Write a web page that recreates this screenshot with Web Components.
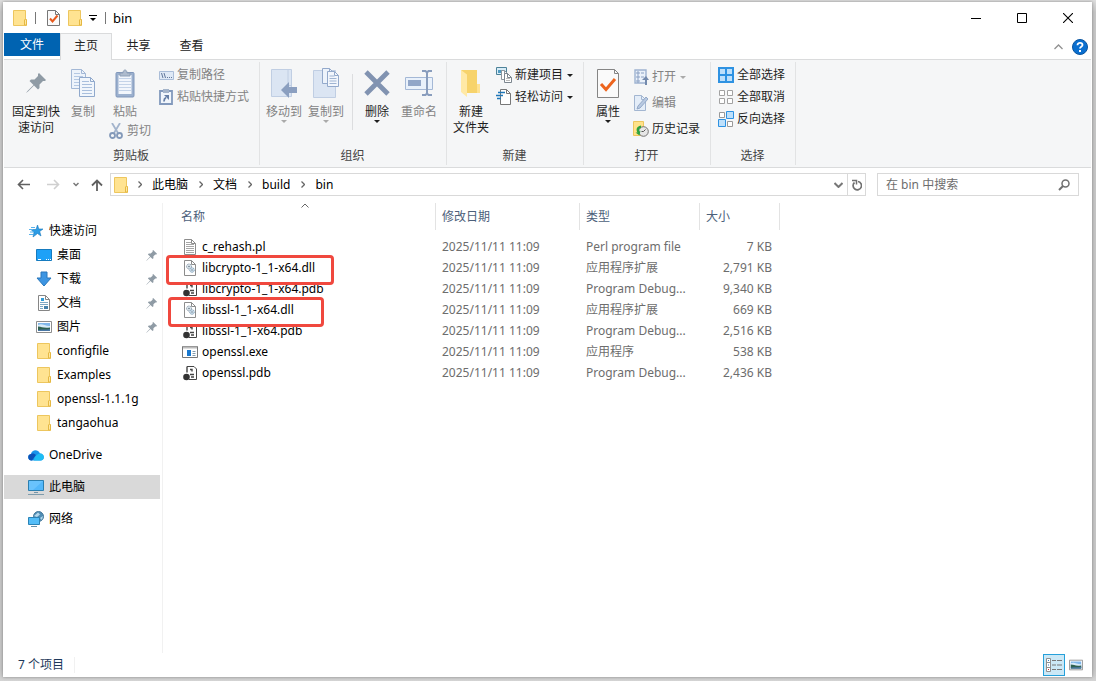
<!DOCTYPE html>
<html lang="zh-CN">
<head>
<meta charset="utf-8">
<meta name="viewport" content="width=device-width, initial-scale=1">
<title>bin</title>
<style>
  html, body {
    margin: 0;
    height: 100%;
  }

  body {
    --line: #dadbdc;
    --ribbon: #f5f6f7;
    --accent: #0063b1;
    --muted: #6d6d6d;
    --heading: #4c607a;
    box-sizing: border-box;
    display: flex;
    padding: 2px 4px 4px 3px;
    background: linear-gradient(#dedede, #c6c6c6 12px, #c6c6c6 calc(100% - 12px), #d4d4d4);
    color: #000;
    font: 12px/16px "Noto Sans", "Noto Sans CJK SC", sans-serif;
  }
</style>
</head>
<body>

<explorer-window>
  <title-bar slot="title">bin</title-bar>
  <ribbon-tabs slot="tabs"></ribbon-tabs>

  <ribbon-bar slot="ribbon">
    <ribbon-group label="剪贴板">
      <ribbon-button large wide icon="pin">固定到快<br>速访问</ribbon-button>
      <ribbon-button large narrow disabled icon="copy">复制</ribbon-button>
      <ribbon-stack>
        <ribbon-button large disabled icon="paste">粘贴</ribbon-button>
        <ribbon-button indent disabled icon="cut">剪切</ribbon-button>
      </ribbon-stack>
      <ribbon-stack small apart>
        <ribbon-button disabled icon="copy-path">复制路径</ribbon-button>
        <ribbon-button disabled icon="paste-link">粘贴快捷方式</ribbon-button>
      </ribbon-stack>
    </ribbon-group>

    <ribbon-group label="组织">
      <ribbon-button large disabled menu icon="move-to">移动到</ribbon-button>
      <ribbon-button large disabled menu icon="copy-to">复制到</ribbon-button>
      <ribbon-divider></ribbon-divider>
      <ribbon-button large menu icon="delete">删除</ribbon-button>
      <ribbon-button large disabled icon="rename">重命名</ribbon-button>
    </ribbon-group>

    <ribbon-group label="新建">
      <ribbon-button large icon="new-folder">新建<br>文件夹</ribbon-button>
      <ribbon-stack small>
        <ribbon-button menu icon="new-item">新建项目</ribbon-button>
        <ribbon-button menu icon="easy-access">轻松访问</ribbon-button>
      </ribbon-stack>
    </ribbon-group>

    <ribbon-group label="打开">
      <ribbon-button large menu icon="properties">属性</ribbon-button>
      <ribbon-stack small loose>
        <ribbon-button disabled menu icon="open">打开</ribbon-button>
        <ribbon-button disabled icon="edit">编辑</ribbon-button>
        <ribbon-button icon="history">历史记录</ribbon-button>
      </ribbon-stack>
    </ribbon-group>

    <ribbon-group label="选择">
      <ribbon-stack small>
        <ribbon-button icon="select-all">全部选择</ribbon-button>
        <ribbon-button icon="select-none">全部取消</ribbon-button>
        <ribbon-button icon="select-invert">反向选择</ribbon-button>
      </ribbon-stack>
    </ribbon-group>
  </ribbon-bar>

  <address-bar slot="address" path="此电脑/文档/build/bin"></address-bar>

  <nav-pane slot="nav">
    <nav-group>
      <nav-item icon="star">快速访问</nav-item>
      <nav-item child pinned icon="desktop">桌面</nav-item>
      <nav-item child pinned icon="download">下载</nav-item>
      <nav-item child pinned icon="document">文档</nav-item>
      <nav-item child pinned icon="picture">图片</nav-item>
      <nav-item child icon="folder">configfile</nav-item>
      <nav-item child icon="folder">Examples</nav-item>
      <nav-item child icon="folder">openssl-1.1.1g</nav-item>
      <nav-item child icon="folder">tangaohua</nav-item>
    </nav-group>
    <nav-group><nav-item icon="cloud">OneDrive</nav-item></nav-group>
    <nav-group><nav-item selected icon="computer">此电脑</nav-item></nav-group>
    <nav-group><nav-item icon="network">网络</nav-item></nav-group>
  </nav-pane>

  <file-list></file-list>
  <status-bar slot="status">7 个项目</status-bar>
</explorer-window>

<script>
const sheet = (x, y, w, h, stroke, fill) =>
  `<path d="M${x} ${y}h${w - 4}l4 4v${h - 4}h-${w}z" fill="${fill}" stroke="${stroke}"/>
   <path d="M${x + w - 4} ${y}v4h4" fill="none" stroke="${stroke}"/>`;

const pinPath = `<path fill="#8f9ba5" d="M13 0l7 7-1 1h-2l-3.500 3.500v3.500l-1.500 1.500-4-4L2 18.500 0 20l1.500-2 6-6-4-4L5 6.500h3.500L12 3V1z"/>`;

const pdb = `<path d="M5 1.500h7l2.500 2.500v10.500H7" fill="#fff" stroke="#444"/><path d="M5 1.500v6M8 4.500h2v2M8 9.500h4M9 12h3" stroke="#444" fill="none" stroke-width="1.400"/><circle cx="4.500" cy="12" r="3.300" fill="#333"/>`;

const dll = `${sheet(2.5, 0.5, 11, 15, "#8c8c8c", "#fff")}<circle cx="7" cy="6.500" r="2.500" fill="#dbe5ec" stroke="#8596a5" stroke-dasharray="1.200 .6"/><circle cx="7" cy="6.500" r=".8" fill="#687987"/><circle cx="10" cy="10" r="2.300" fill="#cfe0ec" stroke="#7c9bb4" stroke-dasharray="1.200 .6"/><circle cx="10" cy="10" r=".7" fill="#687987"/>`;

const picture = `<path d="M.5 2.500h15v11H.5z" fill="#fff" stroke="#8d8d8d"/><path d="M2 4h12v8H2z" fill="#80b7eb"/><path d="M2 6c4-2 6 1 12 1v3H2z" fill="#d8ebf8"/><path d="M2 7.500c4 0 5 2 12 1V12H2z" fill="#2f6150"/><path d="M2 11c5-1 8 0 12-1v2H2z" fill="#4a77a5"/>`;

// [width, height, markup, viewBox when it differs from the size]
const icons = {
  pin: [20, 20, pinPath],
  "pin-small": [11, 11, pinPath, "0 0 20 20"],
  folder: [14, 16, `<path d="M.5.5h12v9h1v6H.5z" fill="#ffe391" stroke="#edc65e"/><path d="M11.500 15v-5l1-1 1 1v5z" fill="#ffe8a1" stroke="#e5b843"/>`],
  check: [13, 16, `${sheet(0.5, 0.5, 12, 15, "#777", "#fafafa")}<path d="M3 8.500l2.500 3 5-6" fill="none" stroke="#e8591c" stroke-width="2"/>`],
  "qat-menu": [8, 6, `<path d="M0 .5h8" stroke="#000"/><path d="M1 3h6L4 6z"/>`],
  minimize: [10, 10, `<path d="M0 5.500h10" stroke="#000"/>`],
  maximize: [10, 10, `<path d="M.5.500h9v9h-9z" fill="none" stroke="#000"/>`],
  close: [10, 10, `<path d="M0 0l10 10M10 0L0 10" stroke="#000" stroke-width="1.100"/>`],
  collapse: [9, 6, `<path d="M.5 5l4-4 4 4" fill="none" stroke="#919191" stroke-width="1.300"/>`],
  help: [16, 16, `<circle cx="8" cy="8" r="7.500" fill="#0a6fd0" stroke="#0a549e"/><path d="M5.500 6.200C5.500 3 10.500 3.200 10.500 6c0 1.800-2.500 1.800-2.500 3.500" fill="none" stroke="#fff" stroke-width="1.800"/><path d="M7 11h2v2H7z" fill="#fff"/>`],
  caret: [6, 3, `<path d="M0 0h6L3 3z" fill="currentColor"/>`],

  copy: [24, 28, `${sheet(0.5, 0.5, 14, 19, "#a3b8d6", "#edf3fb")}<path d="M3 4.500h6M3 7.500h9M3 10.500h9M3 13.500h9M3 16.500h9" stroke="#b4c8e3"/>${sheet(8.5, 8.5, 15, 19, "#90a9cc", "#f1f6fc")}<path d="M11 12.500h7M11 15.500h10M11 18.500h10M11 21.500h10M11 24.500h10" stroke="#a9bfdd"/>`],
  paste: [20, 29, `<path d="M1 4.500q0-1 1-1h16q1 0 1 1v22q0 1.500-1 1.500H2q-1 0-1-1.500z" fill="#9bb0ce" stroke="#8097bb"/><path d="M3.500 6h13v19h-13z" fill="#f2f6fc"/><path d="M4 9.500h12M4 12.500h12M4 15.500h12M4 18.500h12M4 21.500h12" stroke="#c4d3e8"/><path d="M5 7V4h3c0-4 4-4 4 0h3v3z" fill="#aebbcd" stroke="#8fa0b7"/>`],
  cut: [14, 16, `<path d="M3 0l6 10M11 0L5 10" stroke="#a3b4cc" stroke-width="1.800"/><circle cx="3.500" cy="12.500" r="2.500" fill="none" stroke="#8399b9" stroke-width="1.800"/><circle cx="10.500" cy="12.500" r="2.500" fill="none" stroke="#8399b9" stroke-width="1.800"/>`],
  "copy-path": [15, 9, `<path d="M.5.500h14v8H.500z" fill="#dfe9f6" stroke="#aabdd8"/><path d="M2.500 2l1.500 5M5 2l1.500 5M8 6.500h1M10 6.500h1M12 6.500h1" stroke="#61779b"/>`],
  "paste-link": [14, 16, `<path d="M1 2h12v13H1z" fill="#f1f6fc" stroke="#8299bc" stroke-width="1.800"/><path d="M4 0h6v4H4z" fill="#a4b4ca"/><path d="M5 12.500c0-2 0-3 2-4" fill="none" stroke="#667fa6" stroke-width="1.800"/><path d="M5 6h5v5z" fill="#667fa6"/>`],
  "move-to": [26, 29, `<path d="M.5.500h20v27H.500z" fill="#dbe5f3" stroke="#c0cee3"/><path d="M17 .5v16h3" fill="none" stroke="#c0cee3"/><path d="M10 21l8-8v5h8v6h-8v5z" fill="#8b9fc0"/>`],
  "copy-to": [26, 31, `<path d="M.5 2.500h22v27H.500z" fill="#dbe5f3" stroke="#c0cee3"/>${sheet(9.5, 0.5, 11, 15, "#93a9cb", "#edf3fb")}${sheet(14.5, 3.5, 11, 15, "#93a9cb", "#f2f6fc")}<path d="M16.500 8h5M16.500 10.500h7M16.500 13h7M16.500 15.500h7" stroke="#9fb4d2"/>`],
  delete: [26, 26, `<path d="M2 2l22 22M24 2L2 24" stroke="#8193b1" stroke-width="4.800"/>`],
  rename: [28, 26, `<path d="M.5 7.500h27v12H.500z" fill="#e9f1fb" stroke="#a4b8d6"/><path d="M3 10h13v6H3z" fill="#91a6c8"/><path d="M17 1h3.500l1.500 1.500L23.500 1H27M22 2v22M17 25h3.500l1.500-1.500 1.500 1.500H27" fill="none" stroke="#899dbd" stroke-width="2"/>`],
  "new-folder": [20, 28, `<path d="M0 1h16v14h3v9H6z" fill="#f7d36b"/><path d="M0 1l6 4.500V28l-6-5z" fill="#ffe9a6"/><path d="M16 15h3v9h-3z" fill="#ffe293"/>`],
  "new-item": [16, 16, `<path d="M.5.500h10v7H.500z" fill="#d8ecf7" stroke="#4d8299"/><path d="M2 3h5v3H2z" fill="#4e9ac1"/>${sheet(5.5, 3.5, 7, 9, "#8d969e", "#fff")}${sheet(8.5, 6.5, 7, 9, "#7c868f", "#fff")}<path d="M10 11.500h4M10 13.500h4" stroke="#bbb"/>`],
  "easy-access": [16, 16, `${sheet(4.5, 0.5, 10, 15, "#777", "#fff")}<path d="M2 3.500h7M0 6.500h7M1 9.500h4" stroke="#1f77b9" stroke-width="1.500"/>`],
  properties: [22, 29, `${sheet(0.5, 0.5, 21, 28, "#858585", "#fafafa")}<path d="M4 15l5 5.500L18 10" fill="none" stroke="#ed641d" stroke-width="3"/>`],
  open: [15, 16, `<path d="M1 1h11v13H1z" fill="#eaf1fa" stroke="#9eb3d1" stroke-width="1.400"/><path d="M3 3h2v2H3zM3 7h2v2H3zM3 11h2v2H3zM7 4h3M7 8h3" stroke="#8aa0c3" fill="none"/><path d="M11 16v-5H8l4-4 3 4h-2v5z" fill="#738aad"/>`],
  edit: [14, 16, `${sheet(0.5, 0.5, 11, 15, "#a3b6d1", "#e4edf8")}<path d="M3 14l1-3 8-9 2 2-8 9z" fill="#b8c9e1" stroke="#94a9c8"/>`],
  history: [16, 16, `<path d="M.5.500h10v14H.500z" fill="#ffe28a" stroke="#edc65e"/><circle cx="10.500" cy="10.500" r="4.800" fill="#e7e7e7" stroke="#737373"/><path d="M12.500 8.500l-2 2h-2" stroke="#555" fill="none"/><path d="M8 4.500C3 5.500 3 9 4.500 11.500H2.500l4 3 1-5-1 1C5.500 9 6 7 8 7z" fill="#2ba23e"/>`],
  "select-all": [16, 16, `<path d="M1 1h14v14H1zM8 1v14M1 8h14" fill="#bee0fb" stroke="#2e92e2" stroke-width="2"/>`],
  "select-none": [14, 14, `<path d="M.5.500h5v5h-5zM8.500.500h5v5h-5zM.5 8.500h5v5h-5zM8.500 8.500h5v5h-5z" fill="#fff" stroke="#a2a2a2"/>`],
  "select-invert": [16, 16, `<path d="M1.500 1.500h5v5h-5zM9.500 10.500h5v5h-5z" fill="#fff" stroke="#999"/><path d="M8.500.500h7v7h-7zM.5 8.500h7v7h-7z" fill="#bee0fb" stroke="#2e92e2"/>`],

  back: [13, 11, `<path d="M13 5.500H1.500M6 1L1.500 5.500 6 10" fill="none" stroke="#606060" stroke-width="1.600"/>`],
  forward: [13, 11, `<path d="M0 5.500h11.500M7 1l4.500 4.500L7 10" fill="none" stroke="#cfcfcf" stroke-width="1.600"/>`],
  up: [12, 12, `<path d="M6 12V1.500M1 6.500l5-5 5 5" fill="none" stroke="#606060" stroke-width="1.800"/>`],
  "chevron-down": [6, 5, `<path d="M.5 1L3 3.500 5.500 1" fill="none" stroke="#777" stroke-width="1.500"/>`],
  "chevron-wide": [9, 6, `<path d="M.5 1l4 4 4-4" fill="none" stroke="#777" stroke-width="2"/>`],
  "chevron-right": [4, 7, `<path d="M.5.500l3 3-3 3" fill="none" stroke="#666" stroke-width="1.300"/>`],
  refresh: [10, 12, `<path d="M6 2.500A4.200 4.200 0 1 1 2.500 3.500" fill="none" stroke="#707070" stroke-width="1.700"/><path d="M0 1.500h4.500v4" fill="none" stroke="#707070" stroke-width="1.500"/>`],
  search: [12, 12, `<circle cx="7.500" cy="4.500" r="3.500" fill="none" stroke="#707070" stroke-width="1.500"/><path d="M5 7L1 11" stroke="#707070" stroke-width="2"/>`],
  sort: [8, 5, `<path d="M.5 4.500L4 1l3.500 3.500" fill="none" stroke="#666"/>`],

  star: [14, 14, `<path d="M8.500 1l1.300 4h4.200l-3.300 2.500 1.300 4.500-3.500-2.500L4 13l1-4.500L2 5.500h5z" fill="#2c9ce5" stroke="#1a79bd" stroke-width=".6"/><path d="M2 3.500h4M0 5.500h4M1 8h4M0 10.500h4" stroke="#58b2ec"/>`],
  desktop: [16, 12, `<path d="M.5.500h15v11H.500z" fill="#1ea1f7" stroke="#167bbf"/><path d="M2 10.500h3M10 10.500h1M12 10.500h1M14 10.500h1" stroke="#fff"/>`],
  download: [16, 16, `<path d="M5 1h6v6h4l-7 8-7-8h4z" fill="#3d95e2" stroke="#2877bb"/>`],
  document: [12, 16, `${sheet(0.5, 0.5, 11, 15, "#868686", "#fff")}<path d="M3 3h3v3H3z" fill="#2f9bd8"/><path d="M2 7.500h8M2 9.500h8M2 11.500h3M2 13.500h3" stroke="#7fa8c4"/><path d="M6 11h4v3H6z" fill="#4681aa"/>`],
  picture: [16, 16, picture],
  cloud: [16, 11, `<path d="M3.500 10.500C-.5 10.500-1 4.500 3 4c1-4.500 7-5 9-.5 5 0 5 7 .5 7z" fill="#1994ea"/><path d="M3.500 10.500C-.5 10.500-1 4.500 3 4c2-1 4 0 5 1l-4 5.500z" fill="#0b52b8"/><path d="M6 10.500c0-4 3-6.500 6-7 5 0 5 7 .5 7z" fill="#1ebdf4"/>`],
  computer: [16, 15, `<path d="M.5.500h15v10H.500z" fill="#52b7fa" stroke="#2b7fb0"/><path d="M1 1h14L5 10H1z" fill="#7accff" opacity=".6"/><path d="M6 12.500h4" stroke="#7394a8"/><path d="M0 14.500h16" stroke="#7e9bab"/>`],
  network: [16, 16, `<circle cx="10.500" cy="5.500" r="5" fill="#4f8db5" stroke="#47799a"/><path d="M6 5l4-3.500 2 2L9 6zM12 7l3-2-1 4z" fill="#b5d8ec"/><path d="M.5 6.500h11v7H.500z" fill="#53bdf8" stroke="#2b83b6"/><path d="M3 15.500h6" stroke="#6590aa"/>`],

  text: [12, 16, `${sheet(0.5, 0.5, 11, 15, "#8c8c8c", "#fff")}<path d="M2 3.500h5M2 5.500h8M2 7.500h8M2 9.500h8M2 11.500h8M2 13.500h8" stroke="#a6a6a6"/>`],
  dll: [16, 16, dll],
  pdb: [16, 16, pdb],
  exe: [16, 12, `<path d="M.5.500h15v11H.500z" fill="#fff" stroke="#777"/><path d="M1 1.500h14" stroke="#bbb" stroke-width="2"/><path d="M5 4h4v6H5z" fill="#1878cf"/><path d="M10.500 5.500h3M10.500 7.500h3M10.500 9.500h3" stroke="#819aac"/>`],

  details: [16, 14, `<path d="M.5.500h4v13h-4zM.5 4.500h4M.5 9.500h4" fill="#fff" stroke="#8f8f8f"/><path d="M2 2h1v1H2zM2 6.500h1v1H2z" fill="#357dbf"/><path d="M2 11h1v1H2z" fill="#d12c2c"/><path d="M6 2.500h4M11 2.500h5M6 7h4M11 7h5M6 11.500h4M11 11.500h5" stroke="#777"/>`],
  thumbs: [14, 14, picture, "0 0 16 16"]
};

const define = (name, html, setup) => {
  const template = document.createElement("template");
  template.innerHTML = html;

  customElements.define(name, class extends HTMLElement {
    constructor() {
      super();
      this.attachShadow({ mode: "open" });
      this.shadowRoot.appendChild(template.content.cloneNode(true));
    }

    connectedCallback() {
      if (setup && !this.ready) {
        setup(this, this.shadowRoot);
      }
      this.ready = true;
    }
  });
};

define("ui-icon", /* html */ `
  <style>
    :host { display: inline-flex; flex: none; align-items: center; justify-content: center; }
    svg { display: block; flex: none; }
  </style>`,
  (host, root) => {
    const [width, height, body, box] = icons[host.getAttribute("name")];
    root.innerHTML += `<svg width="${width}" height="${height}" viewBox="${box || `0 0 ${width} ${height}`}" aria-hidden="true">${body}</svg>`;
  });

define("explorer-window", /* html */ `
  <style>
    :host {
      flex: 1;
      min-width: 0;
      display: flex;
      flex-direction: column;
      padding: 0 1px;
      background: #fff;
      box-shadow: 0 0 3px rgba(0, 0, 0, .35);
    }
    main { flex: 1; display: flex; min-height: 0; padding-top: 2px; }
  </style>
  <slot name="title"></slot>
  <slot name="tabs"></slot>
  <slot name="ribbon"></slot>
  <slot name="address"></slot>
  <main>
    <slot name="nav"></slot>
    <slot></slot>
  </main>
  <slot name="status"></slot>`);

define("title-bar", /* html */ `
  <style>
    :host { display: flex; align-items: center; height: 31px; padding-left: 9px; }
    button { display: flex; align-items: center; justify-content: center; border: 0; padding: 0; background: none; }
    .quick { width: 22px; height: 22px; }
    .more { width: 14px; height: 22px; }
    .rule { width: 1px; height: 12px; margin: 0 7px 0 5px; background: #777; }
    .rule.first { margin: 0 6px 0 8px; }
    .logo { width: 14px; }
    .name { flex: 1; font-size: 13px; }
    .control { width: 46px; height: 31px; }
  </style>
  <ui-icon class="logo" name="folder"></ui-icon>
  <span class="rule first"></span>
  <button class="quick" aria-label="属性"><ui-icon name="check"></ui-icon></button>
  <button class="quick" aria-label="新建文件夹"><ui-icon name="folder"></ui-icon></button>
  <button class="more" aria-label="自定义快速访问工具栏"><ui-icon name="qat-menu"></ui-icon></button>
  <span class="rule"></span>
  <span class="name"><slot></slot></span>
  <button class="control" aria-label="最小化"><ui-icon name="minimize"></ui-icon></button>
  <button class="control" aria-label="最大化"><ui-icon name="maximize"></ui-icon></button>
  <button class="control" aria-label="关闭"><ui-icon name="close"></ui-icon></button>`);

define("ribbon-tabs", /* html */ `
  <style>
    :host { display: flex; height: 27px; box-shadow: inset 0 -1px var(--line); }
    button {
      font: inherit;
      color: #222;
      box-sizing: border-box;
      width: 53px;
      height: 26px;
      border: 0;
      padding: 0;
      background: none;
    }
    .file { width: 56px; height: 23px; padding-top: 1px; color: #fff; background: var(--accent); }
    .active { width: 52px; height: 27px; padding-bottom: 2px; border: 1px solid var(--line); border-bottom: 0; background: var(--ribbon); }
    .end { flex: 1; display: flex; align-items: center; justify-content: flex-end; gap: 6px; padding-right: 3px; }
    .end button { display: flex; align-items: center; justify-content: center; width: 16px; height: 16px; }
  </style>
  <button class="file">文件</button>
  <button class="active">主页</button>
  <button>共享</button>
  <button>查看</button>
  <div class="end">
    <button aria-label="最小化功能区"><ui-icon name="collapse"></ui-icon></button>
    <button aria-label="帮助"><ui-icon name="help"></ui-icon></button>
  </div>`);

define("ribbon-bar", /* html */ `
  <style>
    :host { display: flex; height: 107px; background: var(--ribbon); border-bottom: 1px solid var(--line); }
  </style>
  <slot></slot>`);

define("ribbon-group", /* html */ `
  <style>
    :host { display: flex; flex-direction: column; justify-content: space-between; position: relative; padding: 0 7px 3px 3px; }
    :host::after { content: ""; position: absolute; right: 0; top: 2px; bottom: 2px; width: 1px; background: #e2e3e4; }
    .items { display: flex; align-items: flex-start; }
    .label { text-align: center; color: #444; padding-left: 2px; }
  </style>
  <div class="items"><slot></slot></div>
  <div class="label"></div>`,
  (host, root) => {
    root.querySelector(".label").textContent = host.getAttribute("label");
  });

define("ribbon-stack", /* html */ `
  <style>
    :host { display: flex; flex-direction: column; align-items: flex-start; padding-left: 3px; --row: 22px; }
    :host([small]) { padding: 4px 4px 0 2px; }
    :host([small][apart]) { padding-left: 5px; }
    :host([loose]) { --row: 26px; }
  </style>
  <slot></slot>`);

define("ribbon-divider", /* html */ `
  <style>
    :host { display: block; width: 1px; height: 56px; margin: 14px 3px 0 5px; background: #dcdddf; }
  </style>`);

define("ribbon-button", /* html */ `
  <style>
    :host { display: block; }
    :host([indent]) { padding-left: 2px; }
    button {
      display: flex;
      align-items: center;
      gap: 3px;
      height: var(--row);
      box-sizing: border-box;
      border: 0;
      padding: 0 0 0 2px;
      font: inherit;
      color: #1e1e1e;
      background: none;
      white-space: nowrap;
    }
    button:disabled { color: #838383; }
    .icon { width: 16px; height: 16px; }
    .caret { width: 6px; height: 3px; margin-left: 1px; }
    button:disabled .caret { color: #aaa; }
    :host([large]) button { flex-direction: column; gap: 0; width: 42px; height: auto; padding: 7px 0 0; }
    :host([large]) .icon { width: 32px; height: 32px; margin-bottom: 5px; }
    :host([large]) .caret { margin-left: 0; }
    :host([wide]) button { width: 58px; }
    :host([narrow]) button { width: 36px; }
  </style>
  <button><span><slot></slot></span></button>`,
  (host, root) => {
    const button = root.querySelector("button");
    button.disabled = host.hasAttribute("disabled");
    button.insertAdjacentHTML("afterbegin", `<ui-icon class="icon" name="${host.getAttribute("icon")}"></ui-icon>`);
    if (host.hasAttribute("large")) {
      if (host.hasAttribute("wide")) button.style.width = "58px";
      if (host.hasAttribute("narrow")) button.style.width = "36px";
    }
    if (host.hasAttribute("menu")) {
      button.insertAdjacentHTML("beforeend", `<ui-icon class="caret" name="caret"></ui-icon>`);
    }
  });

define("address-bar", /* html */ `
  <style>
    :host { display: flex; align-items: center; height: 33px; padding-right: 12px; }
    button { display: flex; align-items: center; justify-content: center; border: 0; padding: 0; height: 21px; background: none; }
    .history { display: flex; padding-left: 4px; }
    .history button { width: 30px; }
    .history .recent { width: 16px; }
    .history .up { width: 26px; }
    .path, .search { box-sizing: border-box; display: flex; align-items: center; height: 23px; border: 1px solid #d9d9d9; background: #fff; }
    .path { flex: 1; padding-left: 3px; }
    .path > ui-icon { width: 13px; }
    .crumbs { flex: 1; display: flex; align-items: center; }
    .crumbs ui-icon { width: 25px; }
    a { color: #000; text-decoration: none; }
    .drop { width: 18px; }
    .refresh { width: 18px; border-left: 1px solid #d9d9d9; }
    .search { width: 202px; margin-left: 11px; padding: 0 8px; }
    input { flex: 1; min-width: 0; border: 0; outline: 0; padding: 0; font: inherit; background: none; }
    input::placeholder { color: var(--muted); opacity: 1; }
  </style>
  <div class="history">
    <button aria-label="后退"><ui-icon name="back"></ui-icon></button>
    <button aria-label="前进" disabled><ui-icon name="forward"></ui-icon></button>
    <button class="recent" aria-label="最近浏览的位置"><ui-icon name="chevron-down"></ui-icon></button>
    <button class="up" aria-label="上移"><ui-icon name="up"></ui-icon></button>
  </div>
  <div class="path">
    <ui-icon name="folder"></ui-icon>
    <nav class="crumbs"></nav>
    <button class="drop" aria-label="以前的位置"><ui-icon name="chevron-wide"></ui-icon></button>
    <button class="refresh" aria-label="刷新"><ui-icon name="refresh"></ui-icon></button>
  </div>
  <div class="search">
    <input type="text" placeholder="在 bin 中搜索" aria-label="在 bin 中搜索">
    <ui-icon name="search"></ui-icon>
  </div>`,
  (host, root) => {
    root.querySelector(".crumbs").innerHTML = host.getAttribute("path").split("/")
      .map(part => `<ui-icon name="chevron-right"></ui-icon><a href="#">${part}</a>`)
      .join("");
  });

define("nav-pane", /* html */ `
  <style>
    :host { display: flex; flex-direction: column; gap: 8px; width: 156px; padding: 16px 2px 0 0; border-right: 1px solid #f1f1f1; }
  </style>
  <slot></slot>`);

define("nav-group", `<style>:host { display: block; }</style><slot></slot>`);

define("nav-item", /* html */ `
  <style>
    :host { display: block; }
    a { display: flex; align-items: center; gap: 5px; height: 24px; padding: 0 3px 0 24px; color: #000; text-decoration: none; }
    :host([child]) a { padding-left: 32px; }
    :host([selected]) a { background: #d9d9d9; }
    .icon { width: 16px; }
    span { flex: 1; white-space: nowrap; }
  </style>
  <a href="#"><span><slot></slot></span></a>`,
  (host, root) => {
    const link = root.querySelector("a");
    link.insertAdjacentHTML("afterbegin", `<ui-icon class="icon" name="${host.getAttribute("icon")}"></ui-icon>`);
    if (host.hasAttribute("pinned")) {
      link.insertAdjacentHTML("beforeend", `<ui-icon name="pin-small"></ui-icon>`);
    }
  });

const files = [
  { name: "c_rehash.pl", icon: "text", type: "Perl program file", size: "7 KB" },
  { name: "libcrypto-1_1-x64.dll", icon: "dll", type: "应用程序扩展", size: "2,791 KB", mark: "first" },
  { name: "libcrypto-1_1-x64.pdb", icon: "pdb", type: "Program Debug...", size: "9,340 KB" },
  { name: "libssl-1_1-x64.dll", icon: "dll", type: "应用程序扩展", size: "669 KB", mark: "second" },
  { name: "libssl-1_1-x64.pdb", icon: "pdb", type: "Program Debug...", size: "2,516 KB" },
  { name: "openssl.exe", icon: "exe", type: "应用程序", size: "538 KB" },
  { name: "openssl.pdb", icon: "pdb", type: "Program Debug...", size: "2,436 KB" }
];

define("file-list", /* html */ `
  <style>
    :host { display: block; flex: 1; min-width: 0; }
    table { table-layout: fixed; width: 617px; border-collapse: separate; border-spacing: 0; }
    .name { width: 273px; }
    .date { width: 144px; }
    .type { width: 120px; }
    .size { width: 80px; }
    th { box-sizing: border-box; height: 27px; padding: 0 6px; border-right: 1px solid #e3e3e3; font-weight: normal; text-align: left; color: var(--heading); position: relative; }
    th:first-child { padding-left: 18px; }
    th ui-icon { position: absolute; top: 0; left: 138px; }
    td { height: 21px; padding: 0 6px; color: var(--muted); white-space: nowrap; }
    td:first-child { padding-left: 19px; color: #000; position: relative; }
    td:last-child { text-align: right; padding-right: 8px; }
    tbody::before { content: ""; display: block; height: 6px; }
    .file { display: flex; align-items: center; gap: 4px; }
    .file ui-icon { width: 16px; height: 16px; }
    .mark { position: absolute; z-index: 1; box-sizing: border-box; border: 3px solid #f0483e; border-radius: 4px; height: 30px; top: -2px; }
    .first { left: 3px; width: 168px; }
    .second { left: 5px; width: 156px; }
  </style>
  <table>
    <thead>
      <tr>
        <th class="name">名称<ui-icon name="sort"></ui-icon></th>
        <th class="date">修改日期</th>
        <th class="type">类型</th>
        <th class="size">大小</th>
      </tr>
    </thead>
    <tbody></tbody>
  </table>`,
  (host, root) => {
    root.querySelector("tbody").innerHTML = files.map(file => `
      <tr>
        <td>
          <div class="file"><ui-icon name="${file.icon}"></ui-icon>${file.name}</div>
          ${file.mark ? `<div class="mark ${file.mark}"></div>` : ""}
        </td>
        <td>2025/11/11 11:09</td>
        <td>${file.type}</td>
        <td>${file.size}</td>
      </tr>`).join("");
  });

define("status-bar", /* html */ `
  <style>
    :host { display: flex; align-items: center; height: 24px; padding: 0 4px 0 14px; color: #1e395b; }
    .count { padding-right: 10px; border-right: 1px solid #f1f1f1; }
    .views { flex: 1; display: flex; justify-content: flex-end; }
    button { box-sizing: border-box; display: flex; align-items: center; justify-content: center; width: 22px; height: 22px; border: 1px solid transparent; padding: 0; background: none; }
    .active { border-color: #26a0da; background: #cbe8f6; }
  </style>
  <span class="count"><slot></slot></span>
  <div class="views">
    <button class="active" aria-label="详细信息"><ui-icon name="details"></ui-icon></button>
    <button aria-label="大图标"><ui-icon name="thumbs"></ui-icon></button>
  </div>`);
</script>
</body>
</html>
